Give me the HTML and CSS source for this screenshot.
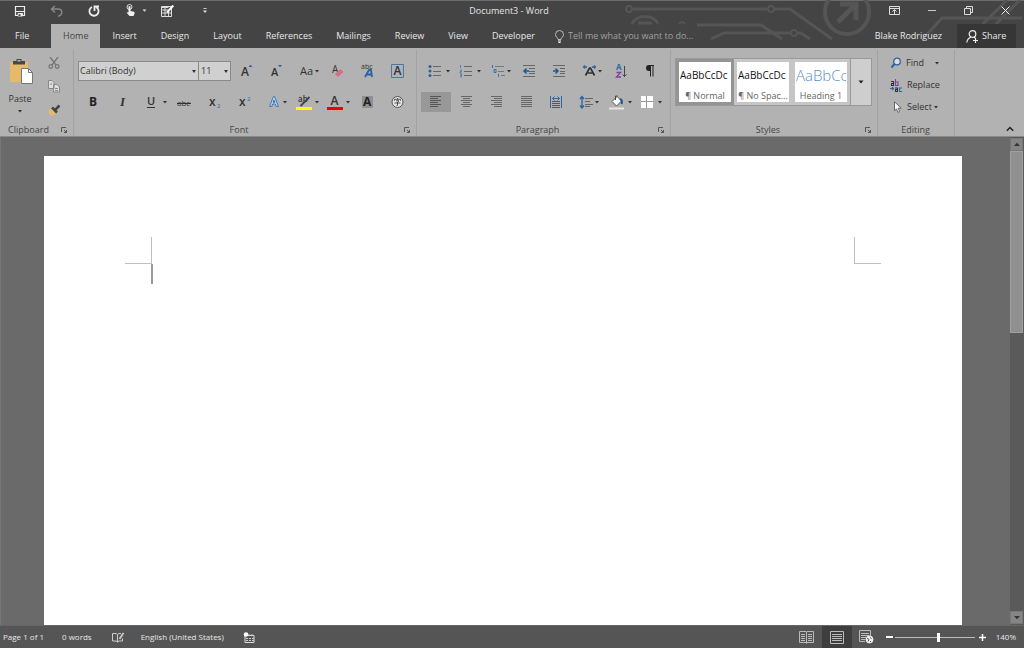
FILE: index.html
```html
<!DOCTYPE html>
<html lang="en">
<head>
<meta charset="utf-8">
<title>Document3 - Word</title>
<link rel="stylesheet" href="styles.css">
</head>
<body>
<svg class="defs" aria-hidden="true">
  <defs>
    <path id="arr" d="M-2 -1h4l-2 2.4z" fill="#333"/>
    <path id="launch" d="M.5 5V.5H5M3 3l2.500 2.500M5.500 3v2.500H3" fill="none" stroke="#555"/>
  </defs>
</svg>
<div class="app">
  <header class="head">
    <svg class="circuit" width="400" height="48" viewBox="624 0 400 48" fill="none" stroke="#555" stroke-width="3" aria-hidden="true">
      <circle cx="629" cy="9" r="3" stroke-width="2"/><path d="M632 9h136M774 9h16l42 30" />
      <circle cx="771" cy="9" r="3" stroke-width="2"/>
      <path d="M632 24c4-10 22-10 26 0M638 23h14" /><path d="M679 24q3-4 6 0" stroke-width="2"/>
      <path d="M697 25h64l21 14M711 39l13-6h66M798 33h3l9 6"/><circle cx="794" cy="33" r="3" stroke-width="2"/>
      <circle cx="847" cy="12" r="22" stroke-width="4"/>
      <path d="M838 22l18-18M840 4h16v16" stroke-width="5"/>
      <path d="M923 39l19-21h80M983 24l24-24M996 24l24-24"/>
    </svg>
    <div class="titlebar">
      <div class="quick">
        <button class="q" aria-label="Save"><svg width="12" height="12" viewBox="0 0 12 12"><path d="M1.500 1.500h9v9h-9z" fill="none" stroke="#eee" stroke-width="1.200"/><path d="M2 6.500h8M4 8.500h4.500V11H4z" fill="#eee" stroke="#eee"/><path d="M4.500 9.200h2V11h-2z" fill="#444"/></svg></button>
        <button class="q" aria-label="Undo"><svg width="13" height="12" viewBox="0 0 13 12" fill="none" stroke="#888" stroke-width="1.500"><path d="M5 1L1.500 4 5 7.500M2 4h6c5 0 5 6 0 7.200"/></svg></button>
        <button class="q" aria-label="Redo"><svg width="12" height="12" viewBox="0 0 12 12" fill="none" stroke="#eee" stroke-width="1.800"><path d="M4 2a4.600 4.600 0 1 0 4.500.3M6.500 6V1.500H11"/></svg></button>
        <button class="q touch" aria-label="Touch mode"><svg width="24" height="13" viewBox="0 0 24 13"><circle cx="4.500" cy="3" r="2.500" fill="none" stroke="#ddd"/><path d="M3.500 2.500q1-1 2 0V7l3.500.8q1 .4.500 2L8.500 12h-4L1.500 8.500l2-.3z" fill="#eee"/><path d="M17.500 5.500h4l-2 2.300z" fill="#ddd"/></svg></button>
        <button class="q" aria-label="Draw table"><svg width="13" height="12" viewBox="0 0 13 12" fill="none" stroke="#ddd"><path d="M.5 1.500h10v10H.5zM.5 2.500h7M.5 5h7M.5 8h10M4 2v9M7.500 7v4"/><path d="M12.300.5L6 7.500" stroke="#fff" stroke-width="2"/></svg></button>
        <button class="q" aria-label="Customize"><svg width="6" height="6" viewBox="0 0 6 6"><path d="M1.500 .5h3" stroke="#ccc"/><path d="M1 2.500h4L3 5z" fill="#ddd"/></svg></button>
      </div>
      <div class="title">Document3 - Word</div>
      <div class="window">
        <button aria-label="Ribbon display options"><svg width="11" height="9" viewBox="0 0 11 9" fill="none" stroke="#ddd"><path d="M.5.5h10v8H.5zM.5 2.500h10M5.500 8V4M3.500 5.500l2-2 2 2"/></svg></button>
        <button aria-label="Minimize"><svg width="8" height="8" viewBox="0 0 8 8"><path d="M0 3.500h8" stroke="#ccc"/></svg></button>
        <button aria-label="Restore"><svg width="9" height="9" viewBox="0 0 9 9" fill="none" stroke="#ddd"><path d="M.5 2.500h6v6h-6zM2.500 2V.5h6v6H7"/></svg></button>
        <button aria-label="Close"><svg width="9" height="9" viewBox="0 0 9 9"><path d="M.5.5l8 8M8.500.5l-8 8" stroke="#eee"/></svg></button>
      </div>
    </div>
    <nav class="tabs">
      <button class="file">File</button><button class="active">Home</button><button>Insert</button><button>Design</button><button>Layout</button><button>References</button><button>Mailings</button><button>Review</button><button>View</button><button>Developer</button>
      <label class="tell"><svg width="9" height="13" viewBox="0 0 9 13" fill="none" stroke="#bbb"><path d="M3 9.500c0-2-2.500-2.500-2.500-5a4 4 0 0 1 8 0c0 2.500-2.500 3-2.500 5z"/><path d="M3 11h3M3.500 12.500h2" stroke="#fff"/></svg><input aria-label="Tell me" placeholder="Tell me what you want to do..."></label>
      <a class="user" href="#">Blake Rodriguez</a>
      <button class="share"><svg width="13" height="13" viewBox="0 0 13 13" fill="none" stroke="#eee" stroke-width="1.200"><circle cx="6.500" cy="4" r="3.300"/><path d="M.8 12.500c.4-3 2-4.500 4.200-5.200M8 7.300l1.500 1M9.500 8v5M7 10.500h5"/></svg>Share</button>
    </nav>
  </header>

  <section class="ribbon" aria-label="Home ribbon">
    <div class="group clipboard">
      <div class="body">
        <button class="paste"><svg width="25" height="28" viewBox="0 0 25 28"><path d="M2 4h18v20H2z" fill="#e6ba68"/><path d="M5 3h3.500V1h5v2H17v3.500H5z" fill="#484848"/><path d="M9.500 2h3v1.500h-3z" fill="#b2b2b2"/><path d="M13.500 10.500h7l4 4v11h-11z" fill="#fff" stroke="#777"/><path d="M20.500 10.500v4h4" fill="none" stroke="#777"/></svg><span>Paste</span><svg width="6" height="4" viewBox="0 0 6 4"><use href="#arr" x="3" y="2"/></svg></button>
        <div class="clip">
          <button aria-label="Cut"><svg width="12" height="12" viewBox="0 0 12 12" fill="none" stroke="#777" stroke-width="1.300"><path d="M2 0l6 8M10 0L4 8"/><circle cx="2.800" cy="9.500" r="1.800"/><circle cx="9.200" cy="9.500" r="1.800"/></svg></button>
          <button aria-label="Copy"><svg width="12" height="13" viewBox="0 0 12 13" fill="#ddd" stroke="#888"><path d="M.5.5H4l2 2v6H.5zM5.500 4.500H9l2.500 2.500v5h-6z"/><path d="M7 8.500h3M7 10.500h3M2 4h2"/></svg></button>
          <button aria-label="Format painter"><svg width="13" height="12" viewBox="0 0 13 12"><path d="M1 6l3-2 4 4-3 4q-1-1-4-1.500z" fill="#e6ba68"/><path d="M4 3.500l5 5M7 6l4.500-4.500" stroke="#444" stroke-width="2.500"/></svg></button>
        </div>
      </div>
      <footer><span>Clipboard</span><button aria-label="Clipboard options"><svg width="7" height="7"><use href="#launch"/></svg></button></footer>
    </div>

    <div class="group font">
      <div class="body rows">
        <div class="row">
          <span class="pick family"><select aria-label="Font"><option>Calibri (Body)</option></select></span>
          <span class="pick size"><select aria-label="Font size"><option>11</option></select></span>
          <button aria-label="Grow font"><svg viewBox="0 0 30 20"><text x="10" y="15" class="g12 semi">A</text><path d="M17.500 6h4l-2-2.300z" fill="#2a62a0"/></svg></button>
          <button aria-label="Shrink font"><svg viewBox="0 0 30 20"><text x="10" y="15" class="g11 semi">A</text><path d="M17 4h4l-2 2.300z" fill="#2a62a0"/></svg></button>
          <button aria-label="Change case"><svg viewBox="0 0 30 20"><text x="9" y="14" class="g11">Aa</text><use href="#arr" x="26" y="10"/></svg></button>
          <button aria-label="Clear formatting"><svg viewBox="0 0 30 20"><text x="11" y="12" class="g10">A</text><path d="M14 13l5.500-5 3 3-5.500 5z" fill="#dc6c83"/></svg></button>
          <button aria-label="Phonetic guide"><svg viewBox="0 0 30 20"><text x="10" y="8" class="g7">abc</text><path d="M14 16l4-7h2l1 7M15.500 13.500h5" fill="none" stroke="#2a62a0" stroke-width="1.800"/></svg></button>
          <button aria-label="Character border"><svg viewBox="0 0 30 20"><path d="M10.500 3.500h12v13h-12z" fill="none" stroke="#4878a8"/><text x="12.500" y="14" class="g12 semi">A</text></svg></button>
        </div>
        <div class="row">
          <button aria-label="Bold"><svg viewBox="0 0 30 20"><text x="11" y="14" class="g12 bold">B</text></svg></button>
          <button aria-label="Italic"><svg viewBox="0 0 30 20"><text x="12" y="14" class="g13 italic">I</text></svg></button>
          <button aria-label="Underline"><svg viewBox="0 0 30 20"><text x="9" y="13" class="g11 semi">U</text><path d="M9 15.500h8" stroke="#333"/><use href="#arr" x="27" y="10"/></svg></button>
          <button aria-label="Strikethrough"><svg viewBox="0 0 30 20"><text x="9" y="14" class="g8">abc</text><path d="M9 11.500h14" stroke="#333"/></svg></button>
          <button aria-label="Subscript"><svg viewBox="0 0 30 20"><text x="11" y="14" class="g12 semi">x</text><text x="19" y="16" class="g6 blue">2</text></svg></button>
          <button aria-label="Superscript"><svg viewBox="0 0 30 20"><text x="11" y="14" class="g12 semi">x</text><text x="19" y="9" class="g6 blue">2</text></svg></button>
          <button aria-label="Text effects"><svg viewBox="0 0 30 20"><path d="M11.500 14.500l4-10h1l4 10h-2.300l-.8-2.500h-2.800l-.8 2.500zM15.200 10.500h1.600l-.8-2.500z" fill="#c5d5e5" stroke="#3e79b5"/><use href="#arr" x="27" y="10"/></svg></button>
          <button aria-label="Highlight"><svg viewBox="0 0 30 20"><path d="M8 15h16v3H8z" fill="#ff0"/><text x="10" y="10" class="g8 semi">ab</text><path d="M21.500 5l-6 6-3 3" stroke="#444" stroke-width="1.800" fill="none"/><use href="#arr" x="29" y="10"/></svg></button>
          <button aria-label="Font color"><svg viewBox="0 0 30 20"><text x="12.500" y="13" class="g12 semi">A</text><path d="M9 15h16v3H9z" fill="#f00000"/><use href="#arr" x="30" y="10"/></svg></button>
          <button aria-label="Character shading"><svg viewBox="0 0 30 20"><path d="M14 4h11v12H14z" fill="#909090"/><text x="15" y="14" class="g12 bold">A</text></svg></button>
          <button aria-label="Enclose characters"><svg viewBox="0 0 30 20"><circle cx="19.500" cy="10" r="5.500" fill="#e5e5e5" stroke="#555"/><path d="M19.500 6v1.200M16.500 8.700V7.300h6v1.400M18 8.800h3l-1.500 1.400v3.300h-1M16.500 11h6" fill="none" stroke="#333" stroke-width=".8"/></svg></button>
        </div>
      </div>
      <footer><span>Font</span><button aria-label="Font options"><svg width="7" height="7"><use href="#launch"/></svg></button></footer>
    </div>

    <div class="group para">
      <div class="body rows">
        <div class="row">
          <button aria-label="Bullets"><svg viewBox="0 0 30 20"><path d="M12 5.500h8M12 10.500h8M12 14.500h8" stroke="#666"/><g fill="#2a62a0"><circle cx="9" cy="5.500" r="1.500"/><circle cx="9" cy="10" r="1.500"/><circle cx="9" cy="14.500" r="1.500"/></g><use href="#arr" x="27" y="10"/></svg></button>
          <button aria-label="Numbering"><svg viewBox="0 0 30 20"><path d="M13 5.500h8M13 10.500h8M13 14.500h8" stroke="#666"/><path d="M9.500 4v3M9 4.500h1M9 9h1.500v1.500H9V12h2M9 13h1.500v3H9M9 14.500h1" fill="none" stroke="#4078b0" stroke-width=".8"/><use href="#arr" x="28" y="10"/></svg></button>
          <button aria-label="Multilevel list"><svg viewBox="0 0 30 20"><path d="M14 5.500h9M17 10.500h6M20 14.500h4" stroke="#777"/><path d="M11.500 4v3M13 8.500h2v3h-2zM17.500 13v3" fill="none" stroke="#3870a8"/><use href="#arr" x="28" y="10"/></svg></button>
          <button aria-label="Decrease indent"><svg viewBox="0 0 30 20"><path d="M12 4.500h12M18 7.500h6M18 10.500h6M18 12.500h6M12 15.500h12" stroke="#666"/><path d="M13 10h5M15.500 7.500L13 10l2.500 2.500" fill="none" stroke="#1c5a9c" stroke-width="1.500"/></svg></button>
          <button aria-label="Increase indent"><svg viewBox="0 0 30 20"><path d="M12 4.500h12M19 7.500h5M19 10.500h5M19 12.500h5M12 15.500h12" stroke="#666"/><path d="M12 10h5M14.500 7.500L17 10l-2.500 2.500" fill="none" stroke="#1c5a9c" stroke-width="1.500"/></svg></button>
          <button aria-label="Asian layout"><svg viewBox="0 0 30 20"><path d="M14.500 14.500L18.500 7h1l4 7.500M16 12h6" fill="none" stroke="#333" stroke-width="1.700"/><path d="M12.500 6H16M14 4.500L12.500 6 14 7.500M24.500 6H21M23 4.500L24.500 6 23 7.500" fill="none" stroke="#2a68a8" stroke-width="1.300"/><use href="#arr" x="29" y="10"/></svg></button>
          <button aria-label="Sort"><svg viewBox="0 0 30 20"><text x="15" y="9" class="g8 bold blue">A</text><path d="M15.500 11.500h4l-4 4.500h4.500" fill="none" stroke="#7e3fa0" stroke-width="1.300"/><path d="M23.500 5v10.500M21.500 13.500l2 2 2-2" fill="none" stroke="#444"/></svg></button>
          <button aria-label="Show marks"><svg viewBox="0 0 30 20"><path d="M18 4.500h5M19.500 5v10.500M22 5v10.500" stroke="#222" fill="none"/><path d="M20 4h-2a3 3 0 0 0 0 6h2z" fill="#222"/></svg></button>
        </div>
        <div class="row">
          <button class="on" aria-label="Align left"><svg viewBox="0 0 30 20"><path d="M9 4.500h11M9 6.500h8M9 8.500h11M9 10.500h8M9 12.500h11M9 14.500h8" stroke="#555"/></svg></button>
          <button aria-label="Center"><svg viewBox="0 0 30 20"><path d="M10 4.500h11M12 6.500h7M10 8.500h11M12 10.500h7M10 12.500h11M12 14.500h7" stroke="#666"/></svg></button>
          <button aria-label="Align right"><svg viewBox="0 0 30 20"><path d="M10 4.500h11M13 6.500h8M10 8.500h11M13 10.500h8M10 12.500h11M13 14.500h8" stroke="#666"/></svg></button>
          <button aria-label="Justify"><svg viewBox="0 0 30 20"><path d="M10 4.500h11M10 6.500h11M10 8.500h11M10 10.500h11M10 12.500h11M10 14.500h11" stroke="#666"/></svg></button>
          <button aria-label="Distributed"><svg viewBox="0 0 30 20"><path d="M9.500 4v12M20.500 4v12M11.500 6.500h7M13.500 4.500l-2 2 2 2M16.500 4.500l2 2-2 2" fill="none" stroke="#2a68a8"/><path d="M11 9.500h8M11 11.500h8M11 13.500h8M11 15.500h8" stroke="#555"/></svg></button>
          <button aria-label="Line spacing"><svg viewBox="0 0 30 20"><path d="M14 6.500h8M14 9.500h5M14 12.500h8M14 14.500h5" stroke="#666"/><path d="M11 5v11M9 7l2-2.500L13 7M9 13.500l2 2.500 2-2.500" fill="none" stroke="#2a62a0" stroke-width="1.300"/><use href="#arr" x="26" y="10"/></svg></button>
          <button aria-label="Shading"><svg viewBox="0 0 30 20"><path d="M8 15.500h15v2H8z" fill="#e5e5e5"/><path d="M11 9.500l5-5 4.500 4.500-5 5z" fill="#fff" stroke="#555"/><path d="M14.500 8V4h2" fill="none" stroke="#444"/><path d="M19 7q3 1 1.500 5" fill="none" stroke="#1f5a98" stroke-width="2"/><use href="#arr" x="29" y="10"/></svg></button>
          <button aria-label="Borders"><svg viewBox="0 0 30 20"><path d="M10 4h12v12H10z" fill="#fff"/><path d="M15.500 4v12M10 9.500h12" stroke="#999"/><use href="#arr" x="29" y="10"/></svg></button>
        </div>
      </div>
      <footer><span>Paragraph</span><button aria-label="Paragraph options"><svg width="7" height="7"><use href="#launch"/></svg></button></footer>
    </div>

    <div class="group styles">
      <div class="body">
        <div class="gallery">
          <button class="card selected"><span class="sample">AaBbCcDc</span><span>¶ Normal</span></button>
          <button class="card"><span class="sample">AaBbCcDc</span><span>¶ No Spac...</span></button>
          <button class="card"><span class="sample heading">AaBbCc</span><span>Heading 1</span></button>
          <button class="more" aria-label="More styles"><svg width="6" height="4" viewBox="0 0 6 4"><path d="M.5.5h5L3 3.500z" fill="#222"/></svg></button>
        </div>
      </div>
      <footer><span>Styles</span><button aria-label="Styles options"><svg width="7" height="7"><use href="#launch"/></svg></button></footer>
    </div>

    <div class="group editing">
      <div class="body">
        <button><svg width="12" height="12" viewBox="0 0 12 12"><circle cx="7" cy="4.500" r="3.300" fill="#ddd" stroke="#2a62a0" stroke-width="1.300"/><path d="M4.500 7L1.500 10.500" stroke="#2a62a0" stroke-width="2"/></svg><span>Find</span><svg class="far" width="6" height="4"><use href="#arr" x="3" y="2"/></svg></button>
        <button class="replace"><svg width="13" height="13" viewBox="0 0 13 13" fill="none" stroke-width="1.100"><path d="M1 2.500h2.500v4h-2v-2h2M5 9h2.500v3.500h-2v-2h2" stroke="#333"/><path d="M5.500 0v6.500h2.500v-3.500H5.500" stroke="#7e3fa0"/><path d="M12 9H9.500v3.500H12M0 9.500h3M2 8l1.500 1.500L2 11" stroke="#2a68a8"/></svg><span>Replace</span></button>
        <button><svg width="13" height="12" viewBox="0 0 13 12"><path d="M4.500.8v9l2-2 1.500 3.500 1.700-.7-1.500-3.400h3z" fill="#fff" stroke="#666"/></svg><span>Select</span><svg class="near" width="6" height="4"><use href="#arr" x="3" y="2"/></svg></button>
      </div>
      <footer><span>Editing</span></footer>
    </div>
    <button class="collapse" aria-label="Collapse ribbon"><svg width="8" height="6" viewBox="0 0 8 6"><path d="M.8 4.800L4 1.500l3.200 3.300" fill="none" stroke="#222" stroke-width="1.500"/></svg></button>
  </section>

  <main class="workspace">
    <article class="page" aria-label="Document page">
      <div class="margin"><span class="corner left"></span><span class="corner right"></span></div>
      <div class="caret"></div>
    </article>
    <div class="scroll">
      <button aria-label="Scroll up"><svg width="8" height="5"><path d="M1 4h6L4 .8z" fill="#333"/></svg></button>
      <div class="thumb"></div>
      <button aria-label="Scroll down"><svg width="8" height="5"><path d="M1 1h6L4 4.200z" fill="#333"/></svg></button>
    </div>
  </main>

  <footer class="status">
    <span class="pages">Page 1 of 1</span><span class="words">0 words</span>
    <button class="proof" aria-label="Proofing"><svg width="13" height="11" viewBox="0 0 13 11" fill="none" stroke="#ccc"><path d="M5.500 10L4 9H.5V1.500H4l1.500 1 1.500-1h2M5.500 2.500V10L7 9h3.500V6.500"/><path d="M11.500 1L7.500 7" stroke-width="1.800"/></svg></button>
    <span class="lang">English (United States)</span>
    <button aria-label="Macro recording"><svg width="12" height="11" viewBox="0 0 12 11"><path d="M2 3.500h9v7H2z" fill="none" stroke="#ddd"/><path d="M5 3h6M3 6.500h8M3 8.500h8" stroke="#ccc" stroke-dasharray="2 1"/><circle cx="3" cy="2.500" r="2.300" fill="#fff"/></svg></button>
    <div class="views">
      <button aria-label="Read mode"><svg width="15" height="13" viewBox="0 0 15 13" fill="none" stroke="#bbb"><path d="M.5.5H7l.5 1L8 .5h6.500v11H8l-.5 1-.5-1H.5zM7.500 1v11M2 3.500h4M2 5.500h4M2 7.500h4M2 9.500h4M9 3.500h4M9 5.500h4M9 7.500h4M9 9.500h4"/></svg></button>
      <button class="on" aria-label="Print layout"><svg width="14" height="13" viewBox="0 0 14 13" fill="none" stroke="#bbb"><path d="M.5.5h13v12H.5zM2 3.500h10M2 5.500h10M2 7.500h10M2 9.500h10"/></svg></button>
      <button aria-label="Web layout"><svg width="15" height="14" viewBox="0 0 15 14" fill="none" stroke="#bbb"><path d="M6 11.500H.5V.5h11V6M2 3.500h8M2 5.500h8M2 7.500h5M2 9.500h4"/><circle cx="10.500" cy="9.500" r="3.500" fill="#eee" stroke="#eee"/><path d="M8 8l2 1.500-1 2M11 7.500l1.500 1M12 11l-1 1" stroke="#555"/></svg></button>
    </div>
    <button class="zoom" aria-label="Zoom out"><svg width="7" height="7"><path d="M0 3h7" stroke="#fff" stroke-width="2"/></svg></button>
    <input class="slider" type="range" min="0" max="100" value="55" aria-label="Zoom">
    <button class="zoom" aria-label="Zoom in"><svg width="7" height="7"><path d="M0 3.500h7M3.500 0v7" stroke="#fff" stroke-width="1.500"/></svg></button>
    <span class="percent">140%</span>
  </footer>
</div>
</body>
</html>
```
FILE: styles.css
```css
* { box-sizing: border-box; }
body { margin: 0; }
body, button, input, select { font: 9px/12px "Open Sans", "Noto Sans", sans-serif; color: #333; }
button { border: 0; padding: 0; margin: 0; background: none; }
svg { display: block; flex: none; }
.defs { position: absolute; width: 0; height: 0; }
.app { height: 100vh; display: flex; flex-direction: column; background: #6a6a6a; }

/* Title bar and tabs */
.head { position: relative; background: #444; border-top: 1px solid #6c6c6c; }
.circuit { position: absolute; right: 0; top: -1px; }
.titlebar { position: relative; display: grid; grid-template-columns: 1fr auto 1fr; align-items: center; height: 19px; margin-bottom: 4px; }
.quick { display: flex; padding-left: 1px; }
.q { width: 37px; height: 18px; display: flex; align-items: center; justify-content: center; }
.touch { padding-left: 12px; }
.title { color: #e4e4e4; padding-right: 6px; }
.window { display: flex; justify-content: flex-end; }
.window button { width: 37px; height: 18px; display: flex; align-items: center; justify-content: center; }
.tabs { position: relative; display: flex; height: 24px; align-items: stretch; padding-right: 8px; }
.tabs button { padding: 0 12px; color: #e8e8e8; }
.tabs .file { width: 51px; padding: 0 15px; text-align: left; }
.tabs .active { background: #b2b2b2; color: #444; }
.tell { display: flex; align-items: center; flex: 1; gap: 4px; padding-left: 8px; }
.tell input { width: 150px; border: 0; background: none; padding: 0; outline: 0; }
.tell input::placeholder { color: #a0a0a0; opacity: 1; }
.user { align-self: center; color: #e8e8e8; text-decoration: none; margin-right: 15px; }
.tabs .share { display: flex; align-items: center; gap: 3px; width: 59px; padding: 0 9px; background: #363636; }

/* Ribbon */
.ribbon { display: flex; height: 89px; background: #b2b2b2; border-bottom: 1px solid #8a8a8a; }
.group { display: flex; flex-direction: column; flex: none; border-right: 1px solid #a2a2a2; margin-top: 2px; }
.group .body { flex: 1; min-height: 0; display: flex; }
.group footer { height: 12px; flex: none; display: flex; align-items: center; justify-content: center; color: #444; }
.group footer span { flex: 1; text-align: center; }
.group footer button { width: 12px; padding-right: 5px; }
.clipboard { width: 74px; }
.clipboard footer span { padding-right: 4px; }
.font { width: 343px; }
.para { width: 254px; }
.styles { width: 207px; }
.editing { width: 77px; }

.paste { width: 40px; display: flex; flex-direction: column; align-items: center; align-self: flex-start; padding-top: 8px; gap: 7px; }
.paste span { margin-bottom: -3px; }
.clip { display: flex; flex-direction: column; padding: 7px 0 0 8px; gap: 11px; }

.rows { flex-direction: column; gap: 11px; padding: 11px 0 0 4px; }
.row { display: flex; height: 20px; }
.row button { width: 30px; height: 20px; flex: none; }
.row button.on { background: #989898; }
.row button svg { width: 30px; height: 20px; overflow: visible; }
.pick { position: relative; flex: none; }
.pick::after { content: ""; position: absolute; right: 3px; top: 9px; border: 2px solid transparent; border-top: 3px solid #333; border-bottom: 0; pointer-events: none; }
.pick select { width: 100%; height: 20px; appearance: none; border: 1px solid #8a8a8a; border-radius: 0; background: #d0d0d0; padding: 0 1px; }
.family { width: 121px; }
.size { width: 32px; }
.size select { border-left: 0; padding-left: 2px; }

text { fill: #333; font-family: "Open Sans", sans-serif; }
.g6 { font-size: 6px; }
.g7 { font-size: 7px; }
.g8 { font-size: 8px; }
.g10 { font-size: 10px; }
.g11 { font-size: 11px; }
.g12 { font-size: 12px; }
.g13 { font-size: 13px; }
.semi { font-weight: 600; }
.bold { font-weight: 700; fill: #222; }
.italic { font-family: "Liberation Serif", serif; font-style: italic; font-weight: 700; }
.blue { fill: #2a68a8; }

.gallery { display: flex; align-items: stretch; height: 48px; margin: 8px 0 0 4px; border: 1px solid #999; background: #c6c6c6; }
.card { width: 58px; display: flex; flex-direction: column; justify-content: space-between; background: #fff; border: 3px solid #c6c6c6; color: #666; overflow: hidden; white-space: nowrap; padding: 0 1px; }
.card.selected { border-color: #949494; }
.card span { width: 100%; text-align: center; overflow: hidden; }
.card .sample { color: #111; font-size: 10px; line-height: 26px; font-weight: 500; text-align: left; }
.card .heading { color: #5690c8; font-size: 15px; font-weight: 300; }
.more { width: 21px; display: flex; align-items: center; justify-content: center; border-left: 1px solid #999; background: #cecece; }

.editing .body { flex-direction: column; padding: 2px 0 0 12px; }
.editing .body button { display: flex; align-items: center; gap: 4px; height: 22px; flex: none; }
.editing .body .far { margin-left: 6px; }
.editing .body .near { margin-left: -3px; }
.editing footer span { padding-right: 1px; }
.collapse { margin-left: auto; padding: 0 10px 4px 0; align-self: flex-end; }

/* Document */
.workspace { flex: 1; min-height: 0; display: flex; border-left: 1px solid #777; }
.page { flex: 1; margin: 19px 48px 0 43px; background: #fff; padding: 81px 81px 0; }
.margin { display: flex; justify-content: space-between; }
.corner { width: 27px; height: 27px; border-bottom: 1px solid #c0c0c0; }
.left { border-right: 1px solid #c0c0c0; }
.right { border-left: 1px solid #c0c0c0; }
.caret { width: 2px; height: 20px; margin-left: 26px; background: #999; }
.scroll { width: 14px; display: flex; flex-direction: column; padding: 1px 1px 1px 0; background: #5a5a5a; }
.scroll button { height: 13px; display: flex; align-items: center; justify-content: center; background: #858585; border: 1px solid #777; }
.scroll .thumb { height: 182px; margin-bottom: auto; background: #909090; border: 1px solid #a0a0a0; }

/* Status bar */
.status { display: flex; align-items: center; height: 23px; flex: none; background: #555; color: #e8e8e8; padding: 0 8px 0 3px; border-top: 1px solid #666; font-size: 8px; }
.words { margin-left: 18px; }
.proof { margin: 0 16px 0 20px; }
.lang { margin-right: 19px; }
.views { display: flex; height: 100%; margin: 0 2px 0 auto; }
.views button { width: 30px; display: flex; align-items: center; justify-content: center; }
.views .on { background: #3e3e3e; }
.zoom { margin-left: 2px; }
.slider { appearance: none; width: 80px; height: 12px; margin: 0 2px; background: linear-gradient(#bbb, #bbb) center / 100% 1px no-repeat; }
.slider::-webkit-slider-thumb { appearance: none; width: 3px; height: 9px; background: #fff; }
.percent { margin-left: 10px; }
```
